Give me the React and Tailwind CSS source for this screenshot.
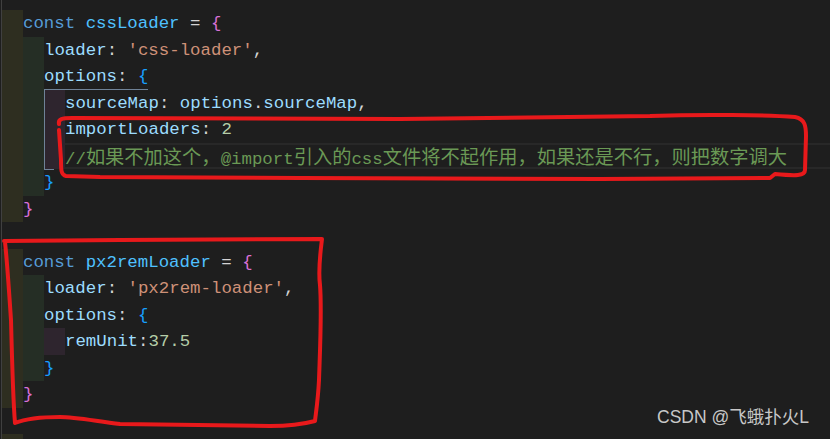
// Code editor screenshot — VS Code dark with indent-rainbow and hand-drawn red marks
const C = {
  kw: 'text-[#569cd6]',
  cst: 'text-[#4fc1ff]',
  prop: 'text-[#9cdcfe]',
  str: 'text-[#ce9178]',
  num: 'text-[#b5cea8]',
  punc: 'text-[#d4d4d4]',
  pink: 'text-[#da70d6]',
  blue: 'text-[#179fff]',
  com: 'text-[#6a9955]',
};

const OLIVE = 'bg-[#2e2e20]';
const GREEN = 'bg-[#252e25]';
const PINK = 'bg-[#2e252e]';
const NONE = 'bg-transparent';

const lines = [
  { cells: [OLIVE], tokens: [['const ', C.kw], ['cssLoader', C.cst], [' = ', C.punc], ['{', C.pink]] },
  { cells: [OLIVE, GREEN], tokens: [['loader', C.prop], [': ', C.punc], ["'css-loader'", C.str], [',', C.punc]] },
  { cells: [OLIVE, GREEN], tokens: [['options', C.prop], [': ', C.punc], ['{', C.blue]] },
  { cells: [OLIVE, GREEN, PINK], guide: true, tokens: [['sourceMap', C.prop], [': ', C.punc], ['options', C.prop], ['.', C.punc], ['sourceMap', C.prop], [',', C.punc]] },
  { cells: [OLIVE, GREEN, PINK], guide: true, tokens: [['importLoaders', C.prop], [': ', C.punc], ['2', C.num]] },
  { cells: [OLIVE, GREEN, PINK], guide: true, comment: true, active: true },
  { cells: [OLIVE, GREEN], tokens: [['}', C.blue]] },
  { cells: [OLIVE], tokens: [['}', C.pink]] },
  { cells: [NONE], tokens: [] },
  { cells: [OLIVE], tokens: [['const ', C.kw], ['px2remLoader', C.cst], [' = ', C.punc], ['{', C.pink]] },
  { cells: [OLIVE, GREEN], tokens: [['loader', C.prop], [': ', C.punc], ["'px2rem-loader'", C.str], [',', C.punc]] },
  { cells: [OLIVE, GREEN], tokens: [['options', C.prop], [': ', C.punc], ['{', C.blue]] },
  { cells: [OLIVE, GREEN, PINK], tokens: [['remUnit', C.prop], [':', C.punc], ['37.5', C.num]] },
  { cells: [OLIVE, GREEN], tokens: [['}', C.blue]] },
  { cells: [OLIVE], tokens: [['}', C.pink]] },
  { cells: [NONE], tokens: [] },
  { cells: [OLIVE], tokens: [] },
];

function Cjk({ children }) {
  return <span className="font-['Noto_Sans_CJK_SC',sans-serif] text-[19.25px]">{children}</span>;
}

function Comment() {
  return (
    <span className={C.com}>
      //<Cjk>如果不加这个，</Cjk>@import<Cjk>引入的</Cjk>css
      <Cjk>文件将不起作用，如果还是不行，则把数字调大</Cjk>
    </span>
  );
}

function Line({ line }) {
  return (
    <div className="flex h-[26.5px]">
      {line.cells.map((bg, i) => (
        <div
          key={i}
          className={`w-[21px] shrink-0 ${bg} ${line.guide && i === 2 ? 'border-l border-[#6f8297]' : ''}`}
        />
      ))}
      <div
        className={
          line.active
            ? 'flex-1 border-y-2 border-[#282828] leading-[22.5px] whitespace-pre'
            : 'flex-1 pt-[1px] leading-[26.5px] whitespace-pre'
        }
      >
        {line.comment ? (
          <Comment />
        ) : (
          line.tokens.map(([t, c], i) => (
            <span key={i} className={c}>
              {t}
            </span>
          ))
        )}
      </div>
    </div>
  );
}

export default function App() {
  return (
    <div className="relative w-[830px] h-[439px] overflow-hidden bg-[#1e1e1e] font-['Liberation_Mono','Noto_Sans_CJK_SC',monospace] text-[17.4px]">
      <div className="ml-[1px] h-full border-l border-[#404040] pt-[10px]">
        {lines.map((line, i) => (
          <Line key={i} line={line} />
        ))}
      </div>

      {/* bracket pair guide ends for options { } */}
      <div className="absolute left-[44px] top-[89px] w-[104px] h-px bg-[#6f8297]" />
      <div className="absolute left-[44px] top-[169px] w-[10px] h-px bg-[#6f8297]" />

      {/* hand-drawn red marks */}
      <svg className="absolute inset-0 pointer-events-none" width="830" height="439" viewBox="0 0 830 439">
        <path
          d="M59 124 C58 119 62 118 72 118 L400 119 L650 116 C705 114 765 115 795 117 C805 119 806 126 806 136 L805 170 C805 176 796 176 775 174 L770 178 L600 179 L300 178 L100 177 L66 176 C61 175 61 170 61 160 L59 130"
          fill="none"
          stroke="#e8191b"
          strokeWidth="4"
          strokeLinecap="round"
          strokeLinejoin="round"
        />
        <path
          d="M4 241 L120 240 L322 239 C320 255 318 270 320 285 C322 310 320 350 319 380 C318 400 316 412 315 421 C300 425 285 426 270 426 L120 424 C95 421 75 417 60 417 C40 417 25 419 15 423 C13 400 12 360 11 320 C9 290 7 260 5 242"
          fill="none"
          stroke="#e8191b"
          strokeWidth="4"
          strokeLinecap="round"
          strokeLinejoin="round"
        />
      </svg>

      <div className="absolute left-[657px] top-[405px] text-[17.5px] leading-[24px] text-[#c8c8c8] font-['Liberation_Sans','Noto_Sans_CJK_SC',sans-serif]">
        CSDN @飞蛾扑火L
      </div>
    </div>
  );
}
